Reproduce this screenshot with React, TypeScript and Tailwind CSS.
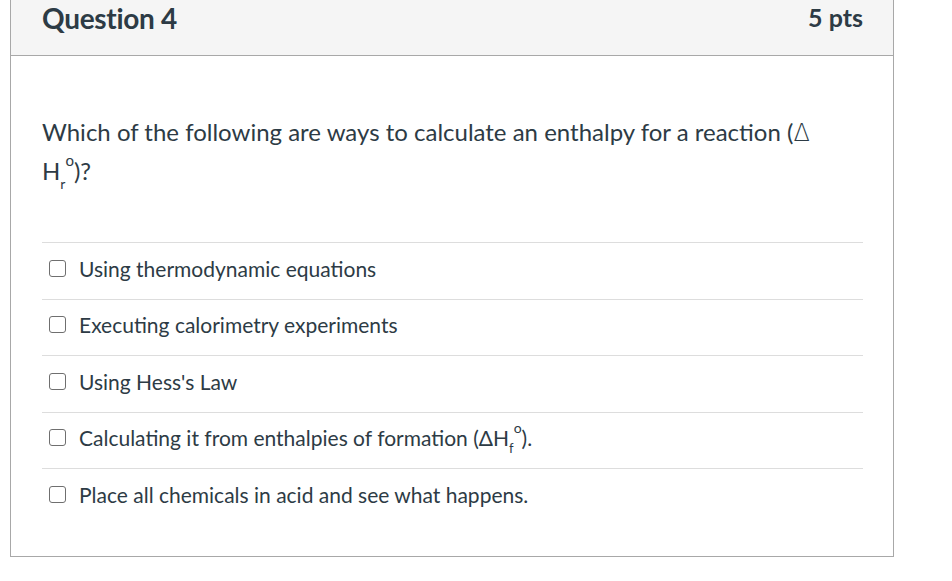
import React from 'react'

const options: React.ReactNode[] = [
  'Using thermodynamic equations',
  'Executing calorimetry experiments',
  "Using Hess's Law",
  <>
    Calculating it from enthalpies of formation (ΔH
    <sub className="text-[13px] leading-none align-[-4px]">f</sub>
    <sup className="text-[14px] leading-none align-[6px]">o</sup>).
  </>,
  'Place all chemicals in acid and see what happens.',
]

export default function App() {
  return (
    <div className="min-h-[581px] bg-white font-['Lato',sans-serif] text-[#2d3b45]">
      <div className="ml-[10px] w-[884px] -mt-[10px] border border-[#a8a8a8]">
        <div className="flex h-[65px] items-center justify-between border-b border-[#a8a8a8] bg-[#f5f5f5] pl-[31px] pr-[30px] pb-[11px]">
          <h2 className="text-[28px] font-bold tracking-[-0.3px]">Question 4</h2>
          <div className="text-[25px] font-bold">5 pts</div>
        </div>
        <div className="px-[31px] pt-[57px] pb-[31px]">
          <p className="text-[24px] leading-[37px]">
            Which of the following are ways to calculate an enthalpy for a reaction (
            <span className="font-['DejaVu_Sans',sans-serif] text-[24px] font-light">Δ</span> H
            <sub className="text-[14px] leading-none align-[-5px]">r</sub>
            <sup className="text-[15px] leading-none align-[7px]">o</sup>)?
          </p>
          <div className="mt-[53px] w-[821px]">
            {options.map((o, i) => (
              <label key={i} className="flex h-[56.5px] items-center gap-[13px] border-t border-[#dddddd] pl-[7px] pb-[5px]">
                <span className="h-[17px] w-[17px] shrink-0 rounded-[3px] border-[1.5px] border-[#6f6f6f] bg-white" />
                <span className="text-[21px]">{o}</span>
              </label>
            ))}
          </div>
        </div>
      </div>
    </div>
  )
}
